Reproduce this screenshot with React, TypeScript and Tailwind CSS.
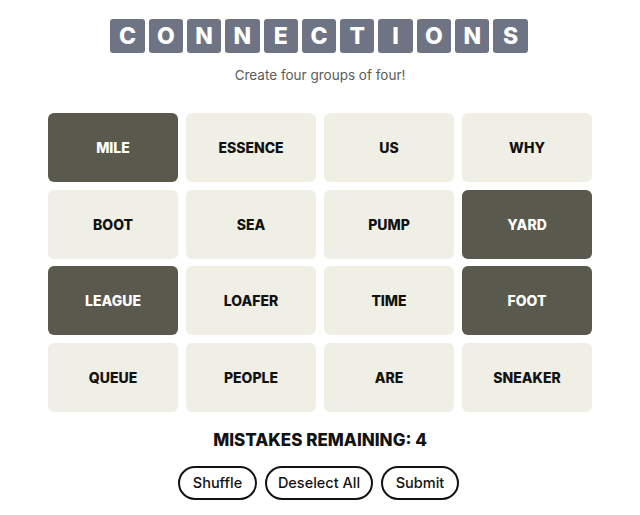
import React from "react";

const TITLE = "CONNECTIONS".split("");

const WORDS: { w: string; sel?: boolean }[] = [
  { w: "MILE", sel: true },
  { w: "ESSENCE" },
  { w: "US" },
  { w: "WHY" },
  { w: "BOOT" },
  { w: "SEA" },
  { w: "PUMP" },
  { w: "YARD", sel: true },
  { w: "LEAGUE", sel: true },
  { w: "LOAFER" },
  { w: "TIME" },
  { w: "FOOT", sel: true },
  { w: "QUEUE" },
  { w: "PEOPLE" },
  { w: "ARE" },
  { w: "SNEAKER" },
];

export default function App() {
  return (
    <div
      className="w-[640px] h-[515px] bg-white flex flex-col items-center overflow-hidden"
      style={{ fontFamily: "Inter, 'Liberation Sans', sans-serif" }}
    >
      <div className="flex gap-[4px] mt-[19px] mr-[2px]">
        {TITLE.map((c, i) => (
          <div
            key={i}
            className="w-[34.3px] h-[34px] rounded-[3px] bg-[#6f7485] text-white flex items-center justify-center text-[23px] font-extrabold leading-none"
          >
            {c}
          </div>
        ))}
      </div>
      <div className="mt-[13px] text-[13.5px] text-[#5b5b5b] leading-[18px]">
        Create four groups of four!
      </div>
      <div className="mt-[29px] grid grid-cols-4 gap-x-[8px] gap-y-[7.7px] w-[544px]">
        {WORDS.map((t) => (
          <div
            key={t.w}
            className={
              t.sel
                ? "h-[69px] rounded-[6px] bg-[#5a594e] text-white flex items-center justify-center text-[14px] font-extrabold"
                : "h-[69px] rounded-[6px] bg-[#efefe6] text-[#121212] flex items-center justify-center text-[14px] font-extrabold"
            }
          >
            {t.w}
          </div>
        ))}
      </div>
      <div className="mt-[17px] text-[17px] font-extrabold text-[#121212] leading-[22px]">
        MISTAKES REMAINING: 4
      </div>
      <div className="mt-[15px] flex gap-[8px] mr-[3px]">
        <button className="h-[34px] w-[79px] rounded-full border-2 border-[#121212] text-[14.5px] font-medium text-[#121212] flex items-center justify-center">
          Shuffle
        </button>
        <button className="h-[34px] w-[108px] rounded-full border-2 border-[#121212] text-[14.5px] font-medium text-[#121212] flex items-center justify-center">
          Deselect All
        </button>
        <button className="h-[34px] w-[78px] rounded-full border-2 border-[#121212] text-[14.5px] font-medium text-[#121212] flex items-center justify-center">
          Submit
        </button>
      </div>
    </div>
  );
}
